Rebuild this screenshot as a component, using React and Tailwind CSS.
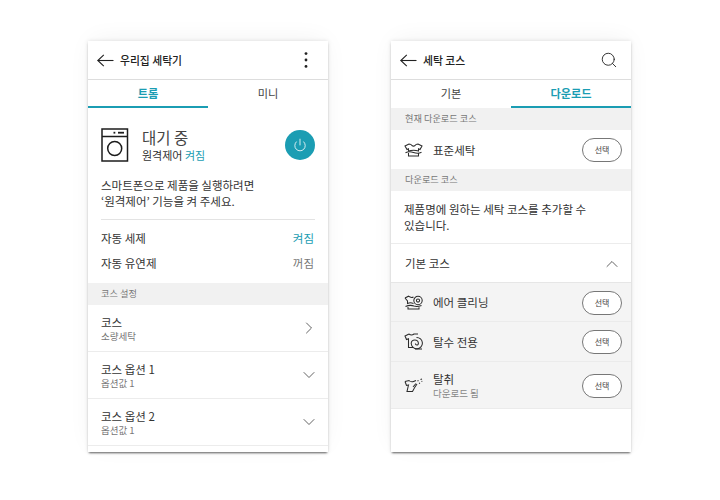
import { ChevronDown, ChevronRight, ChevronUp, Power, Search } from 'lucide-react';

const Card = ({ children }) => (
  <div className="relative w-[240px] h-[411px] bg-white flex flex-col overflow-hidden shadow-[0_0_4px_rgba(0,0,0,0.12),0_2px_2px_-1px_rgba(0,0,0,0.6),0_-4px_24px_-4px_rgba(0,0,0,0.06)]">
    {children}
  </div>
);

const BackArrow = () => (
  <svg width="17" height="13" viewBox="0 0 17 13" fill="none" stroke="#222222" strokeWidth="1.1">
    <path d="M0.8 6.5 H16.5" />
    <path d="M6.8 0.8 L0.8 6.5 L6.8 12.2" />
  </svg>
);

const Dots = () => (
  <svg width="4" height="16" viewBox="0 0 4 16" fill="#222222">
    <circle cx="2" cy="1.6" r="1.4" />
    <circle cx="2" cy="8" r="1.4" />
    <circle cx="2" cy="14.4" r="1.4" />
  </svg>
);

const Header = ({ title, children }) => (
  <div className="h-[39px] shrink-0 flex items-center border-b border-[#dddddd] pl-[9px] pr-[12px]">
    <BackArrow />
    <span className="ml-[6px] text-[10.8px] font-medium text-[#222222]">{title}</span>
    <div className="ml-auto flex items-center">{children}</div>
  </div>
);

const Tabs = ({ left, right, active }) => (
  <div className="h-[28px] shrink-0 grid grid-cols-2 text-[11.2px]">
    {[left, right].map((label, i) => (
      <div
        key={label}
        className={
          i === active
            ? 'flex items-center justify-center font-bold text-[#1b9db3] border-b-2 border-[#1b9db3] pt-[1px]'
            : 'flex items-center justify-center text-[#444444] pb-[1px]'
        }
      >
        {label}
      </div>
    ))}
  </div>
);

const Washer = () => (
  <svg width="28" height="34" viewBox="0 0 28 34" fill="none" stroke="#1c1c1c" strokeWidth="1.5">
    <rect x="1" y="1" width="25.5" height="32" />
    <line x1="1" y1="8.5" x2="26.5" y2="8.5" />
    <circle cx="13.7" cy="20.5" r="7" />
    <rect x="17" y="3.8" width="6" height="1.8" fill="#1c1c1c" stroke="none" />
    <rect x="12.5" y="3.8" width="1.8" height="1.8" fill="#1c1c1c" stroke="none" />
  </svg>
);

const ShirtIcon = () => (
  <svg width="19" height="14" viewBox="0 0 19 14" fill="none" stroke="#2b2b2b" strokeWidth="1.05">
    <path d="M1 3 L5 1 Q7 1 8 2.5 Q9.5 3.8 11 2.5 Q12 1 14 1 L18 3 L16 6.5 L14.5 5.8 L14.5 8 Q9.5 6.5 4.5 8 L4.5 5.8 L3 6.5 Z" />
    <path d="M1.5 9.8 Q5 8 9.5 9.5 Q14 11 17.5 9.3" />
    <path d="M4.5 10 L4.5 13 L14.5 13 L14.5 10" />
  </svg>
);

const AirIcon = () => (
  <svg width="19" height="15" viewBox="0 0 19 15" fill="none" stroke="#2b2b2b" strokeWidth="1.05">
    <path d="M1 3 L4.5 1.2 Q7 3.2 9.5 2" />
    <path d="M1 3 L3.5 6 L3.5 8.5 Q6.5 7 9.5 8.6" />
    <path d="M1.5 11.5 Q6 9.5 10 11 Q13 12 17.5 10.5" />
    <path d="M4 12 L4 14 L15 14 L15 12.2" />
    <circle cx="14" cy="5.5" r="4.2" />
    <circle cx="14" cy="5.5" r="1.6" />
  </svg>
);

const SpinIcon = () => (
  <svg width="19" height="17" viewBox="0 0 19 17" fill="none" stroke="#2b2b2b" strokeWidth="1.05">
    <path d="M5 1 L1 3 L2.5 6.5 L4.5 5.7 L4.5 14.5 L9 14.5" />
    <path d="M5 1 Q7.5 3 10 1 L14 1" />
    <path d="M12.5 4.5 A5.6 5.6 0 1 1 7.2 10.5 A3.6 3.6 0 1 1 14.4 10.5 A1.5 1.5 0 1 1 11.4 10.5" />
    <path d="M11 16 L18 16" />
  </svg>
);

const DryIcon = () => (
  <svg width="19" height="15" viewBox="0 0 19 15" fill="none" stroke="#2b2b2b" strokeWidth="1.05">
    <path d="M1 3.5 L5 2.5 Q7 4.5 9.5 3.5 L12 2.5" />
    <path d="M1 3.5 L2.5 7.5 L4.5 7 L3 13.5 L8.5 13.5 Q10.5 9.5 13 6" />
    <path d="M9 9 L12 5.5" />
    <path d="M13.5 3 L14.5 2.5 M16.5 1.5 L18 1 M15 5.5 L16 5 M17.5 3.5 L18.3 3.2" />
  </svg>
);

const SelectButton = () => (
  <button className="w-[40px] h-[24px] mt-[1px] shrink-0 rounded-full border border-[#777777] bg-white text-[8px] text-[#444444]">
    선택
  </button>
);

const SectionBar = ({ label, className }) => (
  <div className={`shrink-0 flex items-center bg-[#f1f1f1] text-[9.2px] text-[#777777] ${className}`}>{label}</div>
);

const OptionRow = ({ title, sub, icon }) => (
  <div className="h-[47px] shrink-0 flex items-center justify-between border-b border-[#ececec] pl-[13px] pr-[12px]">
    <div>
      <div className="text-[11.5px] leading-[15px] text-[#333333]">{title}</div>
      <div className="text-[9.5px] leading-[12px] text-[#777777]">{sub}</div>
    </div>
    {icon}
  </div>
);

const CourseRow = ({ icon, title, sub, className }) => (
  <div className={`shrink-0 flex items-center pl-[13px] pr-[9px] ${className}`}>
    <div className="w-[29px] flex items-center">{icon}</div>
    <div className="flex-1 pt-[1px]">
      <div className="text-[11.5px] leading-[15px] text-[#333333]">{title}</div>
      {sub && <div className="text-[9.5px] leading-[13px] text-[#888888]">{sub}</div>}
    </div>
    <SelectButton />
  </div>
);

export default function App() {
  return (
    <div
      className="w-[720px] h-[500px] bg-white flex gap-[63px] pl-[88px] pt-[41px]"
      style={{ fontFamily: '"Noto Sans CJK KR", "Noto Sans", sans-serif' }}
    >
      <Card>
        <Header title="우리집 세탁기">
          <span className="mr-[8px]">
            <Dots />
          </span>
        </Header>
        <Tabs left="트롬" right="미니" active={0} />
        <div className="flex items-center pl-[13px] pr-[13px] pt-[19px]">
          <Washer />
          <div className="ml-[13px]">
            <div className="text-[15.5px] leading-[20px] text-[#444444]">대기 중</div>
            <div className="text-[11px] leading-[16px] text-[#333333]">
              원격제어 <span className="text-[#1b9db3]">켜짐</span>
            </div>
          </div>
          <div className="ml-auto w-[30px] h-[30px] rounded-full bg-[#1b9db3] flex items-center justify-center">
            <Power size={14} strokeWidth={1.4} className="text-white" />
          </div>
        </div>
        <p className="px-[13px] pt-[14px] text-[11.5px] leading-[16px] text-[#333333]">
          스마트폰으로 제품을 실행하려면
          <br />
          ‘원격제어’ 기능을 켜 주세요.
        </p>
        <div className="mx-[13px] mt-[10px] border-t border-[#e3e3e3]" />
        <div className="pl-[13px] pr-[14px] pt-[6px] text-[11.5px] text-[#333333]">
          <div className="h-[25px] flex items-center justify-between">
            <span>자동 세제</span>
            <span className="text-[#1b9db3]">켜짐</span>
          </div>
          <div className="h-[25px] flex items-center justify-between">
            <span>자동 유연제</span>
            <span className="text-[#777777]">꺼짐</span>
          </div>
        </div>
        <SectionBar label="코스 설정" className="h-[22px] mt-[7px] pl-[13px]" />
        <OptionRow title="코스" sub="소량세탁" icon={<ChevronRight size={20} strokeWidth={1} className="text-[#444444] mr-[-3px]" />} />
        <OptionRow title="코스 옵션 1" sub="옵션값 1" icon={<ChevronDown size={20} strokeWidth={1} className="text-[#444444] mr-[-3px]" />} />
        <OptionRow title="코스 옵션 2" sub="옵션값 1" icon={<ChevronDown size={20} strokeWidth={1} className="text-[#444444] mr-[-3px]" />} />
      </Card>

      <Card>
        <Header title="세탁 코스">
          <Search size={18} strokeWidth={1.2} className="text-[#222222] mr-[1px]" />
        </Header>
        <Tabs left="기본" right="다운로드" active={1} />
        <SectionBar label="현재 다운로드 코스" className="h-[22px] pl-[14px]" />
        <CourseRow icon={<ShirtIcon />} title="표준세탁" className="h-[39px]" />
        <SectionBar label="다운로드 코스" className="h-[22px] pl-[14px]" />
        <p className="h-[53px] shrink-0 border-b border-[#ececec] pl-[13px] pr-[40px] pt-[10px] text-[11.5px] leading-[16px] text-[#333333]">
          제품명에 원하는 세탁 코스를 추가할 수 있습니다.
        </p>
        <div className="h-[39px] shrink-0 flex items-center justify-between border-b border-[#e6e6e6] pl-[14px] pr-[9px] pt-[1px]">
          <span className="text-[11.5px] text-[#333333]">기본 코스</span>
          <ChevronUp size={20} strokeWidth={1} className="text-[#444444]" />
        </div>
        <CourseRow icon={<AirIcon />} title="에어 클리닝" className="h-[39px] bg-[#f4f4f4] border-b border-[#ebebeb]" />
        <CourseRow icon={<SpinIcon />} title="탈수 전용" className="h-[40px] bg-[#f4f4f4] border-b border-[#ebebeb]" />
        <CourseRow icon={<DryIcon />} title="탈취" sub="다운로드 됨" className="h-[47px] bg-[#f4f4f4] border-b border-[#ebebeb]" />
      </Card>
    </div>
  );
}
